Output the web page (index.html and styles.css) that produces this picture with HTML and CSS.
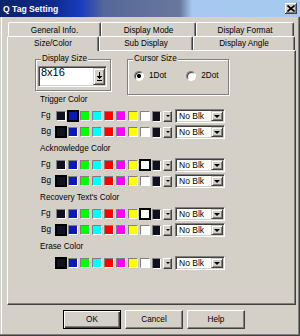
FILE: index.html
```html
<!DOCTYPE html>
<html>
<head>
<meta charset="utf-8">
<title>Q Tag Setting</title>
<link rel="stylesheet" href="styles.css">
</head>
<body>
<div class="window">
  <div class="titlebar">
    <span class="title">Q Tag Setting</span>
    <span class="close"><svg width="8" height="7" viewBox="0 0 8 7"><path d="M0.5 0.5L7.5 6.5M7.5 0.5L0.5 6.5" stroke="#000" stroke-width="1.6"/></svg></span>
  </div>
  <div class="tabs">
    <div class="tabrow back">
      <div class="tab t1">General Info.</div>
      <div class="tab t2">Display Mode</div>
      <div class="tab t3">Display Format</div>
    </div>
    <div class="tabrow front">
      <div class="tab t4 sel">Size/Color</div>
      <div class="tab t5">Sub Display</div>
      <div class="tab t6">Display Angle</div>
    </div>
  </div>
  <div class="panel">
    <div class="groups">
      <fieldset class="group gsize">
        <legend>Display Size</legend>
        <div class="edit">
          <span class="edit-text">8x16</span>
          <span class="spin"><svg width="5" height="9" viewBox="0 0 5 9"><rect x="2" y="0" width="1" height="4"/><rect x="0" y="4" width="5" height="1"/><rect x="1" y="5" width="3" height="1"/><rect x="2" y="6" width="1" height="1"/><rect x="0" y="8" width="5" height="1"/></svg></span>
        </div>
      </fieldset>
      <fieldset class="group gcursor">
        <legend>Cursor Size</legend>
        <div class="radios">
          <span class="radio"><span class="rb on"></span>1Dot</span>
          <span class="radio"><span class="rb"></span>2Dot</span>
        </div>
      </fieldset>
    </div>

    <div class="section">
      <div class="sec-title">Trigger Color</div>
      <div class="crow"><span class="rl">Fg</span><span class="sw c0"></span><span class="sw c1 sel"></span><span class="sw c2"></span><span class="sw c3"></span><span class="sw c4"></span><span class="sw c5"></span><span class="sw c6"></span><span class="sw c7"></span><span class="cur"></span><span class="mini"></span><span class="combo"><span class="combo-text">No Blk</span><span class="combo-btn"></span></span></div>
      <div class="crow"><span class="rl">Bg</span><span class="sw c0 sel"></span><span class="sw c1"></span><span class="sw c2"></span><span class="sw c3"></span><span class="sw c4"></span><span class="sw c5"></span><span class="sw c6"></span><span class="sw c7"></span><span class="cur"></span><span class="mini"></span><span class="combo"><span class="combo-text">No Blk</span><span class="combo-btn"></span></span></div>
    </div>

    <div class="section">
      <div class="sec-title">Acknowledge Color</div>
      <div class="crow"><span class="rl">Fg</span><span class="sw c0"></span><span class="sw c1"></span><span class="sw c2"></span><span class="sw c3"></span><span class="sw c4"></span><span class="sw c5"></span><span class="sw c6"></span><span class="sw c7 sel"></span><span class="cur"></span><span class="mini"></span><span class="combo"><span class="combo-text">No Blk</span><span class="combo-btn"></span></span></div>
      <div class="crow"><span class="rl">Bg</span><span class="sw c0 sel"></span><span class="sw c1"></span><span class="sw c2"></span><span class="sw c3"></span><span class="sw c4"></span><span class="sw c5"></span><span class="sw c6"></span><span class="sw c7"></span><span class="cur"></span><span class="mini"></span><span class="combo"><span class="combo-text">No Blk</span><span class="combo-btn"></span></span></div>
    </div>

    <div class="section">
      <div class="sec-title">Recovery Text's Color</div>
      <div class="crow"><span class="rl">Fg</span><span class="sw c0"></span><span class="sw c1"></span><span class="sw c2"></span><span class="sw c3"></span><span class="sw c4"></span><span class="sw c5"></span><span class="sw c6"></span><span class="sw c7 sel"></span><span class="cur"></span><span class="mini"></span><span class="combo"><span class="combo-text">No Blk</span><span class="combo-btn"></span></span></div>
      <div class="crow"><span class="rl">Bg</span><span class="sw c0 sel"></span><span class="sw c1"></span><span class="sw c2"></span><span class="sw c3"></span><span class="sw c4"></span><span class="sw c5"></span><span class="sw c6"></span><span class="sw c7"></span><span class="cur"></span><span class="mini"></span><span class="combo"><span class="combo-text">No Blk</span><span class="combo-btn"></span></span></div>
    </div>

    <div class="section">
      <div class="sec-title">Erase Color</div>
      <div class="crow"><span class="rl"></span><span class="sw c0 sel"></span><span class="sw c1"></span><span class="sw c2"></span><span class="sw c3"></span><span class="sw c4"></span><span class="sw c5"></span><span class="sw c6"></span><span class="sw c7"></span><span class="cur"></span><span class="mini"></span><span class="combo"><span class="combo-text">No Blk</span><span class="combo-btn"></span></span></div>
    </div>
  </div>
  <div class="buttons">
    <span class="btn def">OK</span>
    <span class="btn">Cancel</span>
    <span class="btn">Help</span>
  </div>
</div>
</body>
</html>
```

FILE: styles.css
```css
* { box-sizing: border-box; }
html, body { margin: 0; padding: 0; }
body {
  background: #d4d0c8;
  font-family: "Liberation Sans", Arial, sans-serif;
  font-size: 8.2px;
  color: #000;
  width: 300px;
  height: 336px;
  overflow: hidden;
}
.window {
  width: 300px;
  height: 336px;
  display: flex;
  flex-direction: column;
  box-shadow: inset -1px -1px #404040, inset -2px -2px #808080, inset 1px 0 #d4d0c8, inset 2px 0 #fff;
}
.titlebar {
  height: 17px;
  flex: none;
  display: flex;
  align-items: center;
  justify-content: space-between;
  padding: 0 3px;
  background: linear-gradient(to right, #0a246a 0%, #0e2a8c 18%, #1a3cc0 27%, #56689a 35%, #68789c 60%, #a6c8f0 64%, #a6caf0 100%);
}
.title {
  color: #fff;
  font-weight: bold;
  font-size: 8.6px;
  line-height: 10px;
}
.close {
  width: 12px;
  height: 11px;
  background: #d4d0c8;
  box-shadow: inset -1px -1px #404040, inset 1px 1px #fff, inset -2px -2px #808080;
  display: flex;
  align-items: center;
  justify-content: center;
}
.close svg { display: block; }

.tabs { flex: none; padding-top: 5px; }
.tabrow { display: flex; height: 14px; align-items: flex-start; }
.tabrow.back { padding-left: 8px; }
.tabrow.front { padding-left: 7px; }
.tab {
  height: 14px;
  border-top: 1px solid #fff;
  border-left: 1px solid #fff;
  border-right: 1px solid #404040;
  box-shadow: inset -1px 0 #808080;
  border-radius: 2px 2px 0 0;
  text-align: center;
  line-height: 11px;
  padding-top: 2px;
  white-space: nowrap;
}
.front .tab { padding-top: 1px; }
.t1 { width: 93px; }
.t2 { width: 95px; }
.t3 { width: 98px; }
.t4 { width: 92px; }
.t5 { width: 94px; }
.t6 { width: 102px; }
.tab.sel {
  height: 15px;
  margin-bottom: -1px;
  position: relative;
  z-index: 1;
  background: #d4d0c8;
}

.panel {
  flex: none;
  margin-left: 7px;
  width: 289px;
  height: 255px;
  border-top: 1px solid #fff;
  border-left: 1px solid #fff;
  border-right: 1px solid #404040;
  border-bottom: 1px solid #404040;
  box-shadow: inset -1px -1px #808080;
  padding: 3px 0 0 27px;
}

.groups { display: flex; align-items: flex-start; }
.group {
  margin: 0;
  padding: 0;
  min-width: 0;
  border: 1px solid #808080;
  box-shadow: inset 1px 1px #fff, 1px 1px #fff;
}
.group legend {
  padding: 0 1px;
  margin-left: 5px;
  line-height: 10px;
  background: #d4d0c8;
}
.gsize { width: 76px; height: 37px; }
.gcursor { width: 102px; height: 41px; margin-left: 16px; }

.edit {
  display: flex;
  margin: 2px 0 0 2px;
  width: 69px;
  height: 21px;
  background: #fff;
  border: 1px solid;
  border-color: #808080 #fff #fff #808080;
  box-shadow: inset 1px 1px #404040, inset -1px -1px #d4d0c8;
  padding: 1px;
}
.edit-text {
  flex: 1;
  font-size: 11px;
  line-height: 10px;
  padding-left: 1px;
  margin-top: -1px;
}
.spin {
  width: 12px;
  background: #d4d0c8;
  border: 1px solid;
  border-color: #d4d0c8 #404040 #404040 #d4d0c8;
  box-shadow: inset 1px 1px #fff, inset -1px -1px #808080;
  display: flex;
  align-items: center;
  justify-content: center;
}
.spin svg { display: block; fill: #000; }

.radios {
  display: flex;
  align-items: center;
  height: 12px;
  margin-top: 6px;
  padding-left: 6px;
}
.radio { display: flex; align-items: center; gap: 5px; line-height: 10px; }
.radio + .radio { margin-left: 20px; }
.rb {
  width: 10px;
  height: 10px;
  border-radius: 50%;
  background: #fff;
  border: 1px solid;
  border-color: #808080 #fff #fff #808080;
  box-shadow: inset 1px 1px #404040;
}
.rb.on { background: radial-gradient(circle, #000 0 1.8px, #fff 2.3px); }

.section + .section { margin-top: 4px; }
.sec-title { line-height: 10px; margin: 0 0 3px 5px; }
.crow {
  display: flex;
  align-items: center;
  height: 16px;
  padding-left: 6px;
}
.rl { width: 15px; flex: none; line-height: 10px; }
.sw {
  flex: none;
  width: 10px;
  height: 10px;
  margin-right: 2px;
  border: 1px solid;
  border-color: #808080 #fff #fff #808080;
}
.sw.sel { border-color: #000; box-shadow: 0 0 0 1px #000; }
.c0 { background: #10101e; }
.c1 { background: #0c1ab4; }
.c2 { background: #00ff00; }
.c3 { background: #00ffff; }
.c4 { background: #ff0000; }
.c5 { background: #ff00ff; }
.c6 { background: #ffff00; }
.c7 { background: #ffffff; }
.cur {
  flex: none;
  width: 9px;
  height: 11px;
  margin-right: 2px;
  background: #10101e;
  border: 1px solid;
  border-color: #808080 #fff #fff #808080;
}
.mini {
  flex: none;
  width: 9px;
  height: 11px;
  margin-right: 3px;
  background: #d4d0c8;
  border: 1px solid;
  border-color: #fff #404040 #404040 #fff;
  box-shadow: inset -1px -1px #808080;
  display: flex;
  align-items: center;
  justify-content: center;
}
.mini::after {
  content: "";
  border-style: solid;
  border-width: 2px 2px 0 2px;
  border-color: #000 transparent transparent transparent;
}
.combo {
  flex: none;
  width: 50px;
  height: 14px;
  display: flex;
  background: #fff;
  border: 1px solid;
  border-color: #808080 #fff #fff #808080;
  box-shadow: inset 1px 1px #404040, inset -1px -1px #d4d0c8;
  padding: 1px;
}
.combo-text {
  flex: 1;
  padding-left: 2px;
  line-height: 10px;
  font-size: 8.5px;
  white-space: nowrap;
}
.combo-btn {
  width: 12px;
  background: #d4d0c8;
  border: 1px solid;
  border-color: #d4d0c8 #404040 #404040 #d4d0c8;
  box-shadow: inset 1px 1px #fff, inset -1px -1px #808080;
  display: flex;
  align-items: center;
  justify-content: center;
}
.combo-btn::after {
  content: "";
  border-style: solid;
  border-width: 3px 3px 0 3px;
  border-color: #000 transparent transparent transparent;
}

.buttons {
  flex: none;
  display: flex;
  gap: 4px;
  padding: 5px 0 0 63px;
}
.btn {
  width: 58px;
  height: 19px;
  display: flex;
  align-items: center;
  justify-content: center;
  border: 1px solid;
  border-color: #fff #404040 #404040 #fff;
  box-shadow: inset -1px -1px #808080;
}
.btn.def {
  border-color: #000;
  box-shadow: inset 1px 1px #fff, inset -1px -1px #404040, inset -2px -2px #808080;
}
```
